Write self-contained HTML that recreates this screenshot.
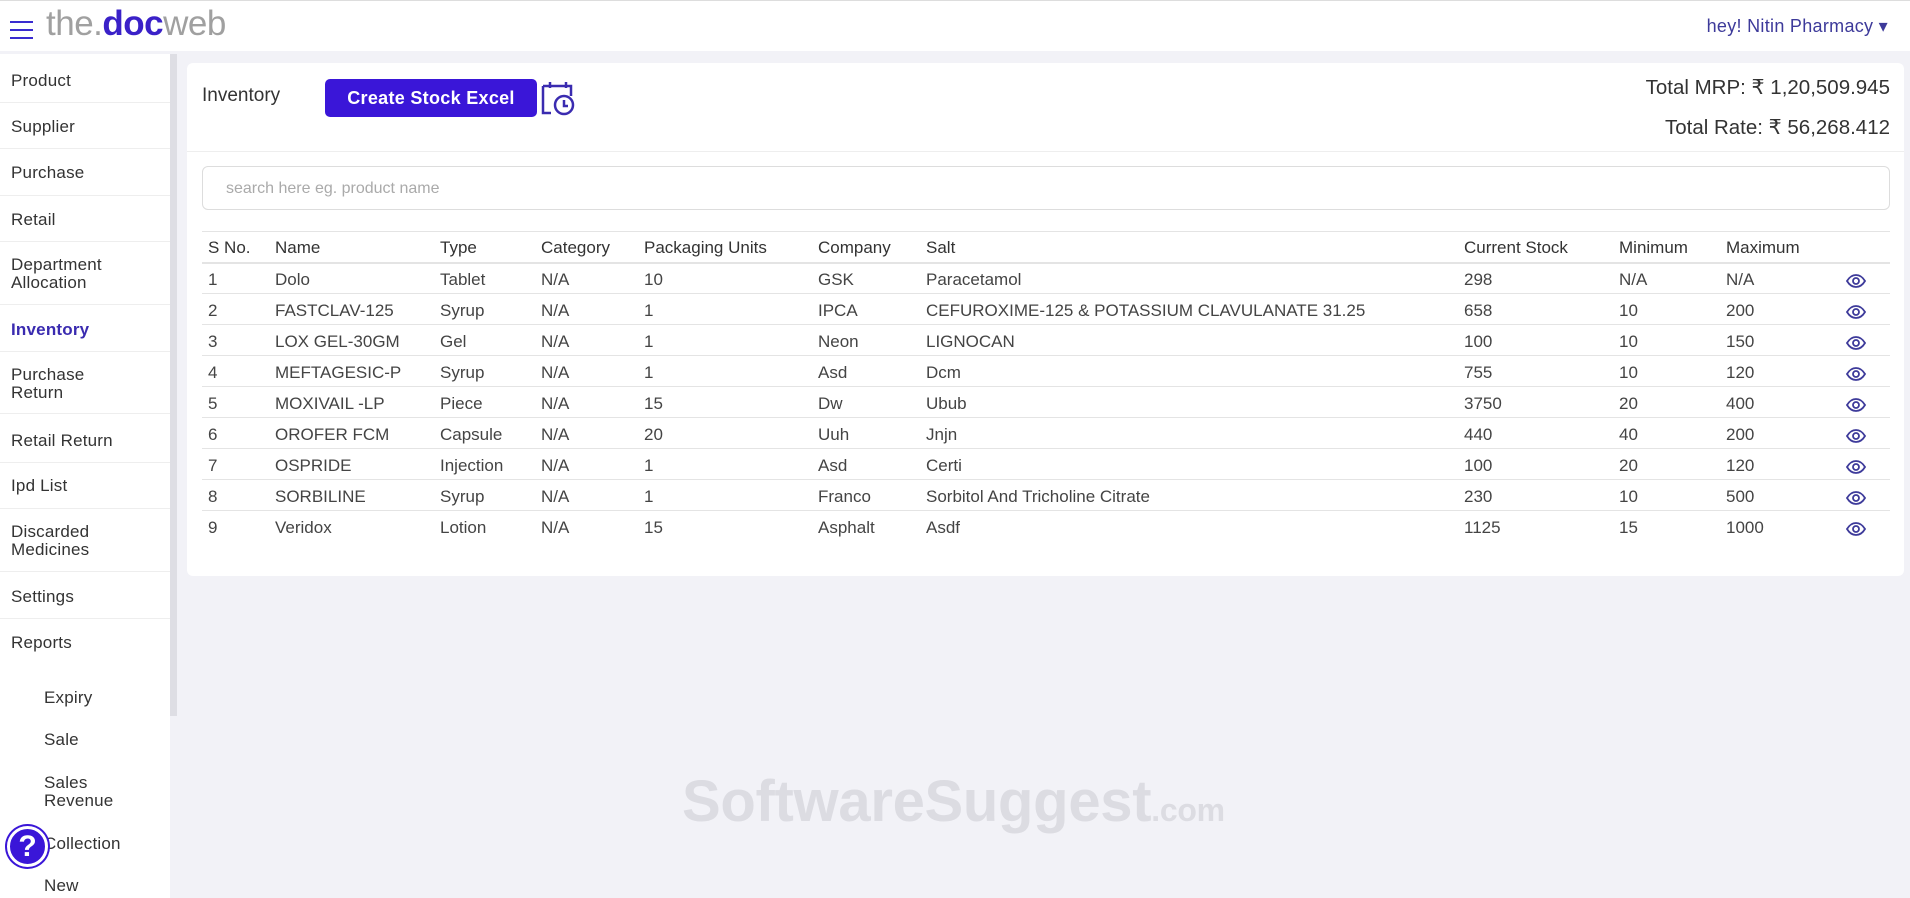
<!DOCTYPE html>
<html><head><meta charset="utf-8"><style>
*{box-sizing:border-box;margin:0;padding:0}
body{width:1910px;height:898px;overflow:hidden;background:#f2f2f7;font-family:"Liberation Sans",sans-serif;color:#333;position:relative}
.hdr{position:absolute;left:0;top:0;width:1910px;height:51px;background:#fff;border-top:1px solid #ddd}
.burger{position:absolute;left:10px;top:20px;width:23px}
.burger i{display:block;height:2px;background:#3a2bd0;margin-bottom:6px}
.logo{position:absolute;left:46px;top:3px;font-size:35px;color:#a0a0a0;letter-spacing:-0.5px}
.logo b{color:#3a21c8}
.user{position:absolute;right:22px;top:15px;font-size:18px;color:#3d3a9a;letter-spacing:.3px}
.side{position:absolute;left:0;top:54px;width:170px;height:844px;background:#fff}
.scroll{position:absolute;left:170px;top:54px;width:7px;height:662px;background:#dedee4}
.side div{position:absolute;left:11px;font-size:17px;color:#333;line-height:18px;letter-spacing:.2px}
.side .sub{left:44px}
.side hr{position:absolute;left:0;width:170px;border:0;border-top:1px solid #eee}
.card{position:absolute;left:187px;top:63px;width:1717px;height:513px;background:#fff;border-radius:6px}
.t1{position:absolute;left:202px;top:85px;font-size:19px;color:#333}
.btn{position:absolute;left:325px;top:79px;width:212px;height:38px;background:#3a16d8;border-radius:5px;color:#fff;font-size:18px;font-weight:bold;text-align:center;line-height:38px;letter-spacing:.3px}
.tot{position:absolute;right:20px;font-size:20.5px;color:#333;text-align:right}
.line{position:absolute;left:187px;width:1717px;border-top:1px solid #eee}
.search{position:absolute;left:202px;top:166px;width:1688px;height:44px;border:1px solid #ddd;border-radius:6px;font-size:16px;color:#aaa;padding:13px 23px}
.row{position:absolute;left:202px;width:1688px;border-top:1px solid #e4e4e4}
.c{position:absolute;font-size:17px;color:#444;white-space:nowrap}
.h{color:#333}
.wm{position:absolute;left:682px;top:768px;font-size:58px;font-weight:bold;color:#dcdce2;letter-spacing:-.3px}
.wm span{font-size:32px}
.help{position:absolute;left:7px;top:826px;width:41px;height:41px;border-radius:50%;background:#3a16d8;border:3px solid #fff;box-shadow:0 0 0 2px #3a16d8;color:#fff;font-weight:bold;font-size:30px;text-align:center;line-height:36px}
</style></head><body>
<div class="hdr">
<div class="burger"><i></i><i></i><i></i></div>
<div class="logo">the.<b>doc</b>web</div>
<div class="user">hey! Nitin Pharmacy &#9662;</div>
</div>
<div class="side">
<div style="top:18px">Product</div><hr style="top:48px">
<div style="top:64px">Supplier</div><hr style="top:94px">
<div style="top:110px">Purchase</div><hr style="top:141px">
<div style="top:157px">Retail</div><hr style="top:187px">
<div style="top:202px">Department<br>Allocation</div><hr style="top:250px">
<div style="top:267px;color:#3a2bb0;font-weight:bold">Inventory</div><hr style="top:297px">
<div style="top:312px">Purchase<br>Return</div><hr style="top:359px">
<div style="top:378px">Retail Return</div><hr style="top:408px">
<div style="top:423px">Ipd List</div><hr style="top:454px">
<div style="top:469px">Discarded<br>Medicines</div><hr style="top:517px">
<div style="top:534px">Settings</div><hr style="top:564px">
<div style="top:580px">Reports</div>
<div class="sub" style="top:635px">Expiry</div>
<div class="sub" style="top:677px">Sale</div>
<div class="sub" style="top:720px">Sales<br>Revenue</div>
<div class="sub" style="top:781px">Collection</div>
<div class="sub" style="top:823px">New</div>
</div>
<div class="scroll"></div>
<div class="card"></div>
<div class="t1">Inventory</div>
<div class="btn">Create Stock Excel</div>
<svg style="position:absolute;left:541px;top:79px" width="34" height="37" viewBox="0 0 34 37" fill="none" stroke="#3a2bb0" stroke-width="2.5">
<path d="M9 3v6M25 3v6M2 7h28v10M2 7v27h8"/>
<circle cx="23" cy="26" r="9"/><path d="M23 21v6h4"/>
</svg>
<div class="tot" style="top:75px">Total MRP: ₹ 1,20,509.945</div>
<div class="tot" style="top:115px">Total Rate: ₹ 56,268.412</div>
<div class="line" style="top:151px"></div>
<div class="search">search here eg. product name</div>
<div class="row" style="top:231px"></div>
<div class="row" style="top:262px;border-top:2px solid #e4e4e4"></div>
<div id="t"></div>
<script>
var cols=[208,275,440,541,644,818,926,1464,1619,1726];
var hd=["S No.","Name","Type","Category","Packaging Units","Company","Salt","Current Stock","Minimum","Maximum"];
var rows=[
["1","Dolo","Tablet","N/A","10","GSK","Paracetamol","298","N/A","N/A"],
["2","FASTCLAV-125","Syrup","N/A","1","IPCA","CEFUROXIME-125 &amp; POTASSIUM CLAVULANATE 31.25","658","10","200"],
["3","LOX GEL-30GM","Gel","N/A","1","Neon","LIGNOCAN","100","10","150"],
["4","MEFTAGESIC-P","Syrup","N/A","1","Asd","Dcm","755","10","120"],
["5","MOXIVAIL -LP","Piece","N/A","15","Dw","Ubub","3750","20","400"],
["6","OROFER FCM","Capsule","N/A","20","Uuh","Jnjn","440","40","200"],
["7","OSPRIDE","Injection","N/A","1","Asd","Certi","100","20","120"],
["8","SORBILINE","Syrup","N/A","1","Franco","Sorbitol And Tricholine Citrate","230","10","500"],
["9","Veridox","Lotion","N/A","15","Asphalt","Asdf","1125","15","1000"]];
var h="";
hd.forEach(function(t,i){h+='<div class="c h" style="left:'+cols[i]+'px;top:238px">'+t+'</div>';});
rows.forEach(function(r,j){var y=270+j*31;
r.forEach(function(t,i){h+='<div class="c" style="left:'+cols[i]+'px;top:'+y+'px">'+t+'</div>';});
h+='<svg style="position:absolute;left:1846px;top:'+(y+4)+'px" width="20" height="14" viewBox="0 0 20 14" fill="none" stroke="#3d3a9a" stroke-width="1.8"><path d="M1 7C4 2 7 1 10 1s6 1 9 6c-3 5-6 6-9 6S4 12 1 7z"/><circle cx="10" cy="7" r="3"/></svg>';
if(j<8)h+='<div class="row" style="top:'+(y+23)+'px"></div>';});
document.getElementById("t").innerHTML=h;
</script>
<div class="wm">SoftwareSuggest<span>.com</span></div>
<div class="help">?</div>
</body></html>
